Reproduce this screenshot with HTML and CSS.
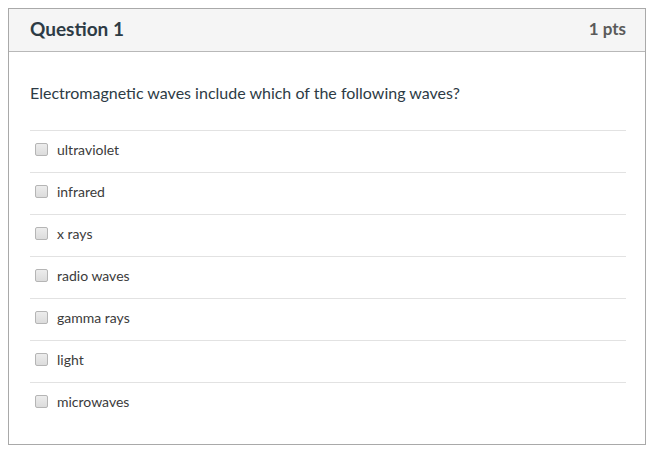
FILE: index.html
```html
<!DOCTYPE html>
<html>
<head>
<meta charset="utf-8">
<link rel="stylesheet" href="styles.css">
</head>
<body>
<div class="card">
  <div class="header">
    <div class="title">Question 1</div>
    <div class="pts">1 pts</div>
  </div>
  <div class="body">
    <p class="question">Electromagnetic waves include which of the following waves?</p>
    <div class="answers">
      <label class="answer"><span class="box"></span>ultraviolet</label>
      <label class="answer"><span class="box"></span>infrared</label>
      <label class="answer"><span class="box"></span>x rays</label>
      <label class="answer"><span class="box"></span>radio waves</label>
      <label class="answer"><span class="box"></span>gamma rays</label>
      <label class="answer"><span class="box"></span>light</label>
      <label class="answer"><span class="box"></span>microwaves</label>
    </div>
  </div>
</div>
</body>
</html>
```
FILE: styles.css
```css
body {
  margin: 8px;
  background: #fff;
  font-family: Lato, "Open Sans", sans-serif;
  color: #2d3b45;
}
.card {
  width: 638px;
  height: 437px;
  box-sizing: border-box;
  border: 1px solid #a9a9a9;
  background: #fff;
}
.header {
  height: 43px;
  box-sizing: border-box;
  background: #f5f5f5;
  border-bottom: 1px solid #b8b8b8;
  display: flex;
  align-items: center;
  justify-content: space-between;
  padding: 0 19px 4px 21px;
}
.title {
  font-size: 19px;
  font-weight: 700;
  color: #2d3b45;
}
.pts {
  font-size: 17px;
  font-weight: 700;
  color: #5a5a5a;
}
.body {
  padding: 0 19px 0 21px;
}
.question {
  margin: 0;
  padding-top: 31px;
  height: 47px;
  font-size: 16px;
  color: #2d3b45;
  line-height: 20px;
}
.answers {
  border-top: 1px solid #e2e2e2;
}
.answer {
  display: flex;
  align-items: center;
  height: 37px;
  padding-bottom: 4px;
  border-bottom: 1px solid #e2e2e2;
  font-size: 14px;
  color: #3b3b3b;
}
.answer:last-child {
  border-bottom: none;
}
.box {
  width: 11px;
  height: 11px;
  margin: 0 9px 0 5px;
  border: 1px solid #b5b5b5;
  border-radius: 2px;
  background: linear-gradient(#ececec, #dcdcdc);
}
```
